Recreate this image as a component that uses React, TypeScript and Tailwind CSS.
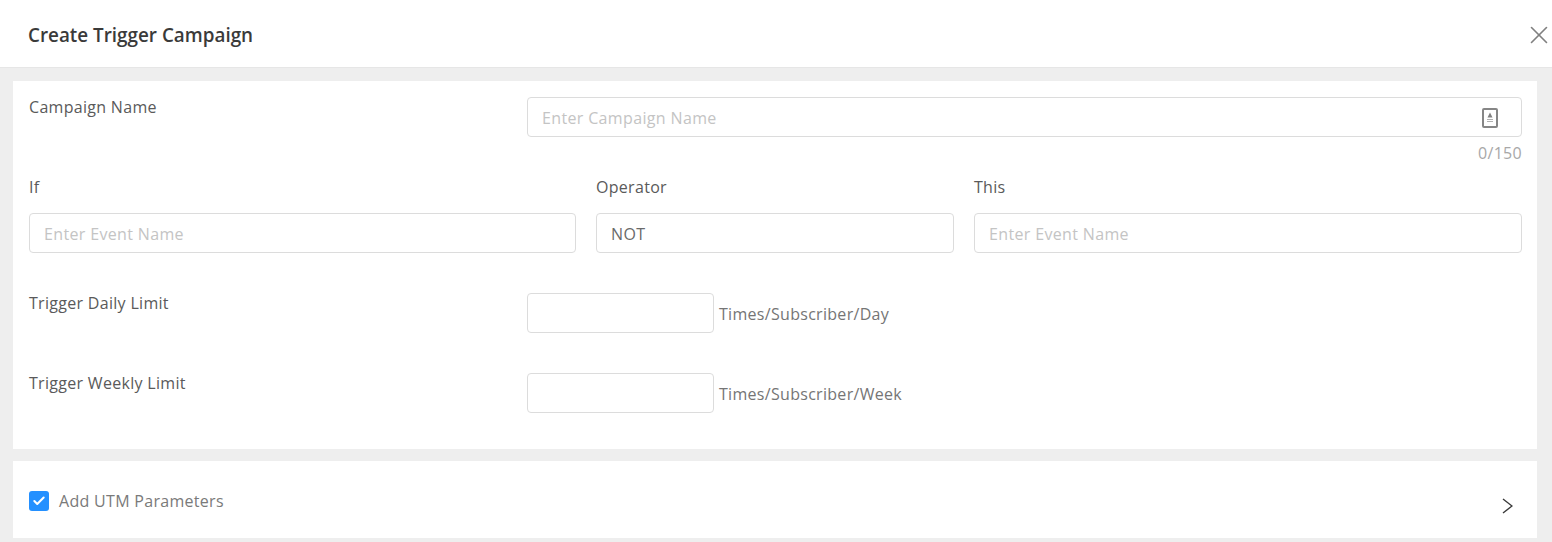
import React from 'react';
import { X, Check } from 'lucide-react';

const font = "font-['Open_Sans','Noto_Sans',sans-serif]";
const labelText = 'text-[16px] leading-5 tracking-[0.3px] text-[#5a5a5a]';

const TextField = ({ placeholder, value, className = '' }: { placeholder?: string; value?: string; className?: string }) => (
  <div className={`h-10 flex items-center px-[14px] pt-[1px] bg-white border border-[#dcdcdc] rounded-[4px] text-[16px] tracking-[0.35px] ${className}`}>
    {value ? <span className="text-[#6a6a6a]">{value}</span> : <span className="text-[#c4c4c4]">{placeholder}</span>}
  </div>
);

const LimitRow = ({ label, unit, className = '' }: { label: string; unit: string; className?: string }) => (
  <div className={`flex ${className}`}>
    <div className={`w-[498px] ${labelText}`}>{label}</div>
    <TextField className="w-[187px]" />
    <div className="ml-[5px] pt-[11px] text-[16px] leading-5 tracking-[0.3px] text-[#757575]">{unit}</div>
  </div>
);

export default function App() {
  return (
    <div className={`h-[542px] w-[1552px] overflow-hidden bg-[#eeeeee] ${font}`}>
      <div className="h-[68px] bg-white border-b border-[#e6e6e6] flex items-center justify-between pl-7 pr-0 pt-[3px]">
        <h1 className="text-[18.85px] font-semibold text-[#3a3a3a]">Create Trigger Campaign</h1>
        <X className="w-[30px] h-[30px] -mr-[2px] text-[#808080]" strokeWidth={1.3} />
      </div>

      <div className="ml-[13px] mr-[15px] mt-[13px] h-[368px] bg-white border border-white pl-[15px] pr-[14px] pt-[15px]">
        <div className="flex">
          <div className={`w-[498px] ${labelText}`}>Campaign Name</div>
          <div className="flex-1">
            <div className="h-10 flex items-center justify-between pl-[14px] pt-[1px] pr-[23px] border border-[#dcdcdc] rounded-[4px] text-[16px] tracking-[0.35px] text-[#c4c4c4]">
              <span>Enter Campaign Name</span>
              <svg width="16" height="20" viewBox="0 0 16 20" fill="none">
                <rect x="1" y="1" width="14" height="18" rx="1" stroke="#868686" strokeWidth="2" />
                <path d="M8 4.5 10.5 9.5h-5z" fill="#808080" />
                <path d="M5 11.5h6M5 13.5h6" stroke="#b0b0b0" strokeWidth="1.2" />
              </svg>
            </div>
            <div className="mt-[6px] text-right text-[16px] leading-5 tracking-[0.3px] text-[#a8a8a8]">0/150</div>
          </div>
        </div>

        <div className="mt-[14px] grid grid-cols-[547px_358px_548px] gap-x-5">
          <div className={labelText}>If</div>
          <div className={labelText}>Operator</div>
          <div className={labelText}>This</div>
          <TextField className="mt-4" placeholder="Enter Event Name" />
          <TextField className="mt-4" value="NOT" />
          <TextField className="mt-4" placeholder="Enter Event Name" />
        </div>

        <LimitRow className="mt-10" label="Trigger Daily Limit" unit="Times/Subscriber/Day" />
        <LimitRow className="mt-10" label="Trigger Weekly Limit" unit="Times/Subscriber/Week" />
      </div>

      <div className="ml-[13px] mr-[15px] mt-3 h-[77px] bg-white border border-white flex items-center justify-between pl-[15px] pr-[23px]">
        <div className="flex items-center gap-[10px] mt-[2px]">
          <span className="w-5 h-5 rounded-[3px] bg-[#2490ff] flex items-center justify-center">
            <Check className="w-[14px] h-[14px] text-white" strokeWidth={3.5} />
          </span>
          <span className="text-[16px] tracking-[0.3px] text-[#7a7a7a]">Add UTM Parameters</span>
        </div>
        <svg width="11" height="16" viewBox="0 0 11 16" fill="none" className="mt-[12px]">
          <path d="M1 1l9 7-9 7" stroke="#3a3a3a" strokeWidth="1.4" />
        </svg>
      </div>
    </div>
  );
}
